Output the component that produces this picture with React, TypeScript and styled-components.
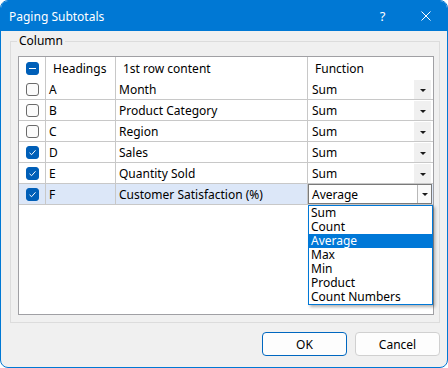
import styled, { createGlobalStyle } from "styled-components";

const GlobalStyle = createGlobalStyle`
  html, body {
    margin: 0;
    padding: 0;
    background: #ffffff;
  }
  body {
    font-family: "Noto Sans", "Segoe UI", sans-serif;
    font-size: 12px;
    color: #000;
  }
  * {
    box-sizing: border-box;
  }
`;

type Check = "on" | "off" | "mixed";

interface Row {
  check: Check;
  heading: string;
  content: string;
  fn: string;
}

const rows: Row[] = [
  { check: "off", heading: "A", content: "Month", fn: "Sum" },
  { check: "off", heading: "B", content: "Product Category", fn: "Sum" },
  { check: "off", heading: "C", content: "Region", fn: "Sum" },
  { check: "on", heading: "D", content: "Sales", fn: "Sum" },
  { check: "on", heading: "E", content: "Quantity Sold", fn: "Sum" },
  { check: "on", heading: "F", content: "Customer Satisfaction (%)", fn: "Average" },
];

const functions = ["Sum", "Count", "Average", "Max", "Min", "Product", "Count Numbers"];

export default function App() {
  return (
    <>
      <GlobalStyle />
      <Window>
        <TitleBar>
          <Title>Paging Subtotals</Title>
          <CaptionBtn>?</CaptionBtn>
          <CaptionBtn>
            <svg width="10" height="10" viewBox="0 0 10 10">
              <path d="M0.5 0.5 L9.5 9.5 M9.5 0.5 L0.5 9.5" stroke="#fff" strokeWidth="1" fill="none" />
            </svg>
          </CaptionBtn>
        </TitleBar>
        <Body>
          <Group>
            <GroupLabel>Column</GroupLabel>
            <Grid>
              <HeaderRow>
                <CheckCell>
                  <CheckBox state="mixed" />
                </CheckCell>
                <HeadCell>Headings</HeadCell>
                <HeadCell>1st row content</HeadCell>
                <HeadCell $last>Function</HeadCell>
              </HeaderRow>
              {rows.map((r, i) => {
                const editing = i === rows.length - 1;
                return (
                  <DataRow key={r.heading} $selected={editing}>
                    <CheckCell>
                      <CheckBox state={r.check} />
                    </CheckCell>
                    <Cell>{r.heading}</Cell>
                    <Cell>{r.content}</Cell>
                    {editing ? (
                      <EditCell>
                        <Combo>
                          <ComboText>{r.fn}</ComboText>
                          <ComboBtn>
                            <Arrow />
                          </ComboBtn>
                          <DropList>
                            {functions.map((f) => (
                              <DropItem key={f} $active={f === r.fn}>
                                {f}
                              </DropItem>
                            ))}
                          </DropList>
                        </Combo>
                      </EditCell>
                    ) : (
                      <FnCell>
                        <FnText>{r.fn}</FnText>
                        <FnBtn>
                          <Arrow />
                        </FnBtn>
                      </FnCell>
                    )}
                  </DataRow>
                );
              })}
            </Grid>
          </Group>
          <Buttons>
            <Button $primary>OK</Button>
            <Button>Cancel</Button>
          </Buttons>
        </Body>
      </Window>
    </>
  );
}

function CheckBox({ state }: { state: Check }) {
  return (
    <Box $on={state !== "off"}>
      {state === "on" && (
        <svg width="9" height="9" viewBox="0 0 9 9">
          <path d="M1.5 4.8 L3.6 6.7 L7.5 2.3" stroke="#fff" strokeWidth="1" fill="none" />
        </svg>
      )}
      {state === "mixed" && <Dash />}
    </Box>
  );
}

const COLS = "27px 70px 192px 124px";

const Window = styled.div`
  width: 448px;
  height: 368px;
  border: 1px solid #0078d4;
  border-radius: 8px;
  overflow: hidden;
  background: #f0f0f0;
  display: flex;
  flex-direction: column;
`;

const TitleBar = styled.div`
  height: 30px;
  background: #0078d4;
  color: #fff;
  display: flex;
  align-items: center;
  padding-left: 8px;
  flex-shrink: 0;
`;

const Title = styled.div`
  flex: 1;
  font-size: 12px;
`;

const CaptionBtn = styled.div`
  width: 43px;
  height: 30px;
  display: flex;
  align-items: center;
  justify-content: center;
  font-size: 13px;
`;

const Body = styled.div`
  flex: 1;
  padding: 10px 7px 0 9px;
  display: flex;
  flex-direction: column;
`;

const Group = styled.div`
  position: relative;
  border: 1px solid #dcdcdc;
  padding: 14px 5px 7px 7px;
`;

const GroupLabel = styled.span`
  position: absolute;
  top: -9px;
  left: 6px;
  padding: 0 2px;
  line-height: 16px;
  background: #f0f0f0;
`;

const Grid = styled.div`
  height: 259px;
  border: 1px solid #a0a0a4;
  background: #fff;
`;

const HeaderRow = styled.div`
  display: grid;
  grid-template-columns: ${COLS};
  height: 22px;
`;

const DataRow = styled.div<{ $selected?: boolean }>`
  display: grid;
  grid-template-columns: ${COLS};
  height: 21px;
  border-bottom: 1px solid #c8c8c8;
  background: ${(p) => (p.$selected ? "#dce7f8" : "#fff")};
`;

const CheckCell = styled.div`
  border-right: 1px solid #c8c8c8;
  display: flex;
  align-items: center;
  justify-content: center;
`;

const HeadCell = styled.div<{ $last?: boolean }>`
  border-right: ${(p) => (p.$last ? "none" : "1px solid #c8c8c8")};
  padding-left: 7px;
  display: flex;
  align-items: center;
  white-space: nowrap;
`;

const Cell = styled.div`
  border-right: 1px solid #c8c8c8;
  padding-left: 3px;
  display: flex;
  align-items: center;
  white-space: nowrap;
  overflow: hidden;
`;

const FnCell = styled.div`
  display: flex;
  padding: 1px 1px 0 4px;
  background: #fff;
`;

const FnText = styled.div`
  flex: 1;
  display: flex;
  align-items: center;
`;

const FnBtn = styled.div`
  width: 17px;
  background: #f0f0f0;
  display: flex;
  align-items: center;
  justify-content: center;
`;

const EditCell = styled.div`
  display: flex;
`;

const Combo = styled.div`
  position: relative;
  flex: 1;
  display: flex;
  border: 1px solid #7a7a7a;
  background: #fff;
`;

const ComboText = styled.div`
  flex: 1;
  padding-left: 3px;
  display: flex;
  align-items: center;
`;

const ComboBtn = styled.div`
  width: 14px;
  border-left: 1px solid #b8b8b8;
  display: flex;
  align-items: center;
  justify-content: center;
  background: #fafafa;
`;

const Arrow = styled.span`
  width: 0;
  height: 0;
  border-left: 3px solid transparent;
  border-right: 3px solid transparent;
  border-top: 3px solid #1a1a1a;
  margin-top: 1px;
`;

const DropList = styled.div`
  position: absolute;
  top: calc(100% + 2px);
  left: -1px;
  width: 125px;
  border: 1px solid #0078d7;
  background: #fff;
  box-shadow: 2px 2px 3px rgba(0, 0, 0, 0.3);
  z-index: 2;
`;

const DropItem = styled.div<{ $active?: boolean }>`
  height: 14px;
  line-height: 14px;
  padding-left: 2px;
  white-space: nowrap;
  background: ${(p) => (p.$active ? "#0078d7" : "transparent")};
  color: ${(p) => (p.$active ? "#fff" : "#000")};
`;

const Box = styled.div<{ $on: boolean }>`
  width: 13px;
  height: 13px;
  border-radius: 3px;
  border: 1px solid ${(p) => (p.$on ? "#005fb8" : "#6a6a6a")};
  background: ${(p) => (p.$on ? "#005fb8" : "#fbfbfb")};
  display: flex;
  align-items: center;
  justify-content: center;
`;

const Dash = styled.span`
  width: 7px;
  height: 1px;
  background: #fff;
`;

const Buttons = styled.div`
  margin-top: 9px;
  display: flex;
  justify-content: flex-end;
  gap: 8px;
`;

const Button = styled.button<{ $primary?: boolean }>`
  width: 85px;
  height: 24px;
  font-family: inherit;
  font-size: 12px;
  color: #000;
  background: #fdfdfd;
  border: 1px solid ${(p) => (p.$primary ? "#0067c0" : "#d0d0d0")};
  border-radius: 4px;
  padding: 0;
`;
